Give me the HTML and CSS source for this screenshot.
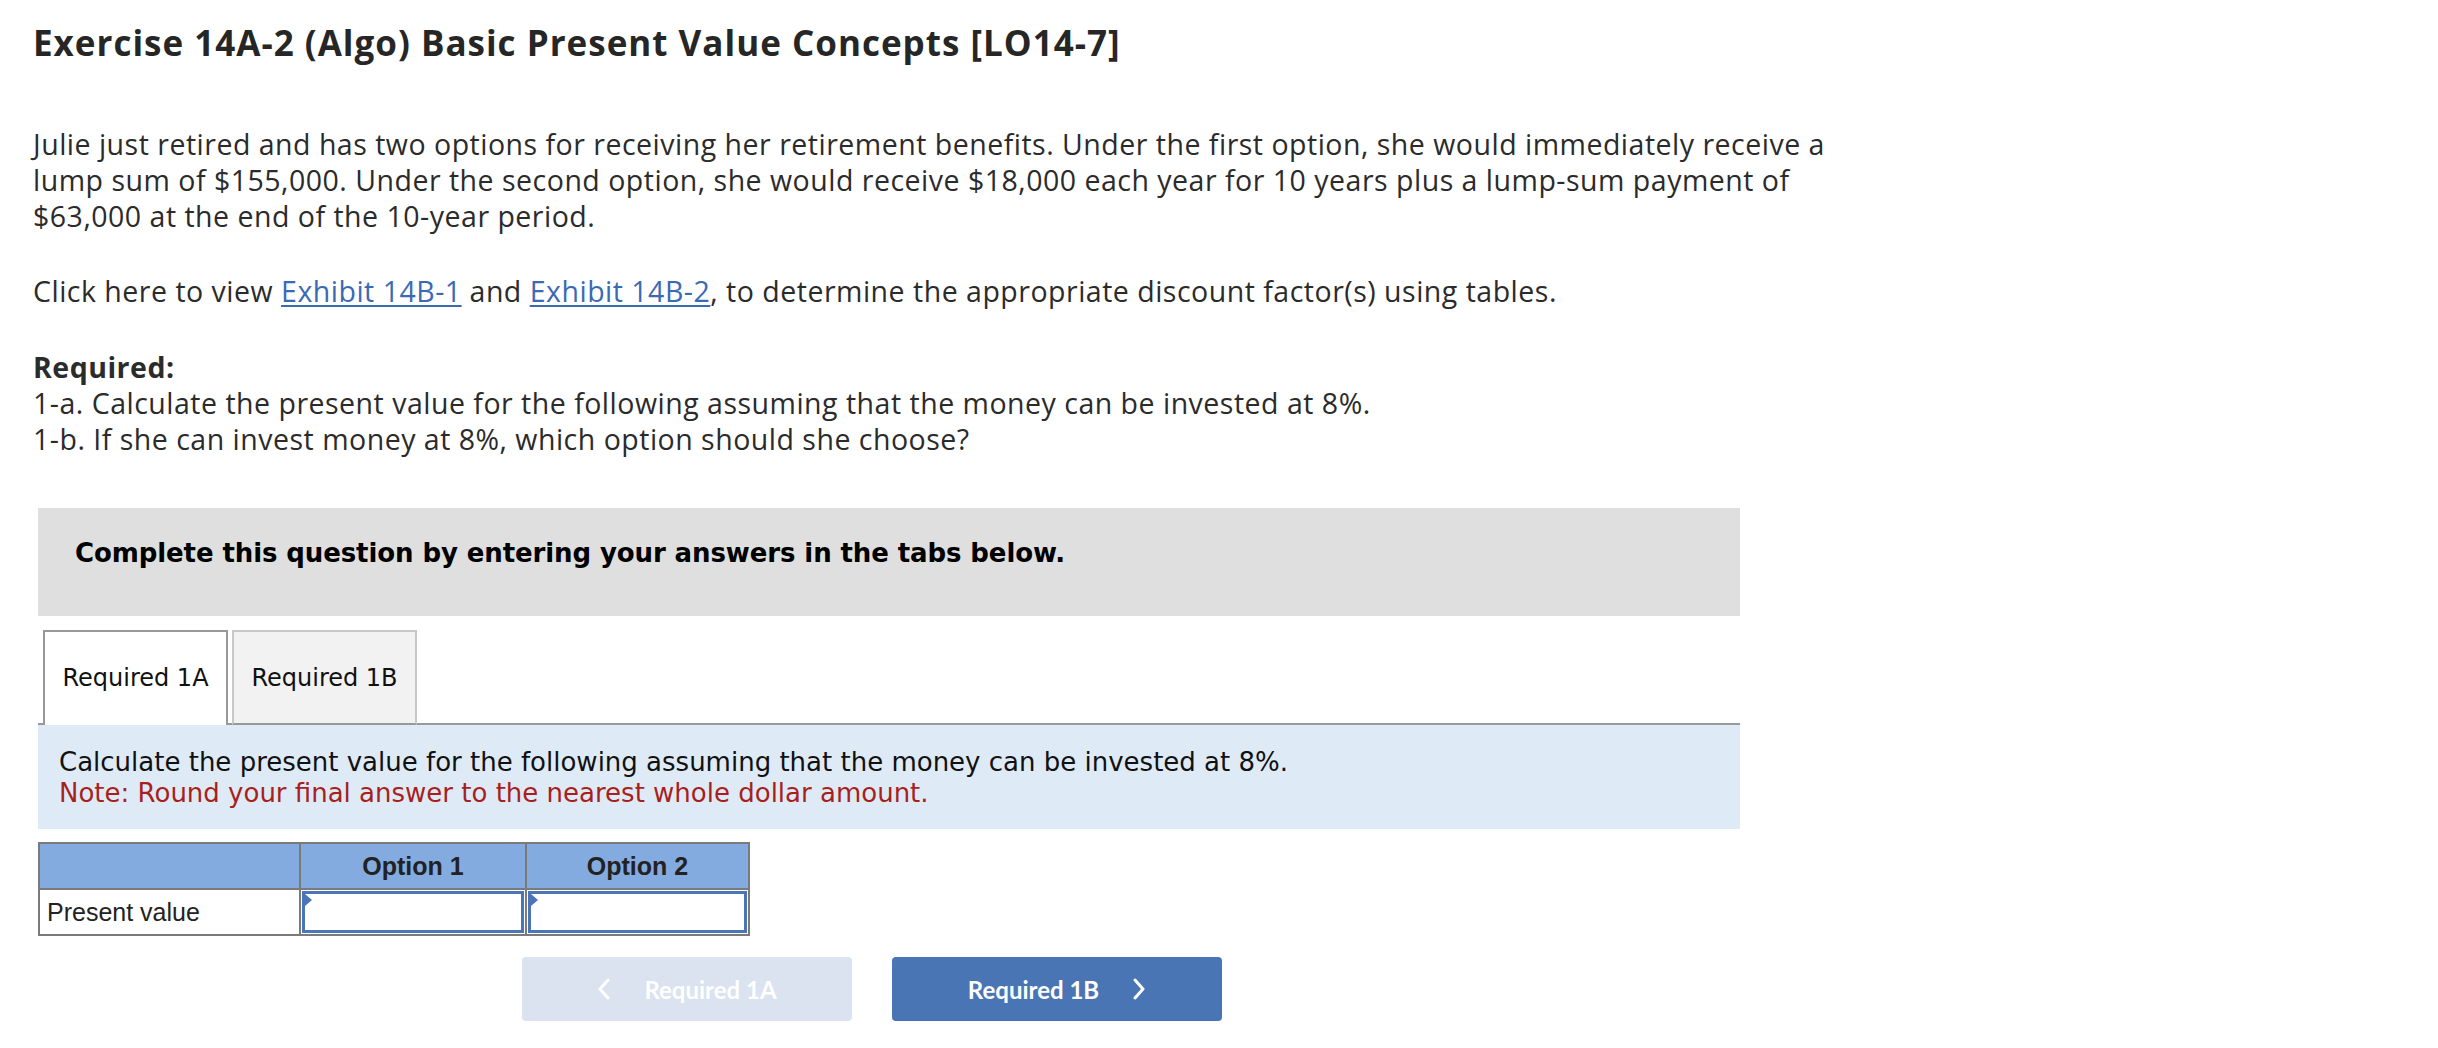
FILE: index.html
```html
<!DOCTYPE html>
<html lang="en">
<head>
<meta charset="utf-8">
<title>Exercise 14A-2 (Algo) Basic Present Value Concepts</title>
<link rel="stylesheet" href="styles.css">
</head>
<body>
<main class="page">
  <h1 class="title">Exercise 14A-2 (Algo) Basic Present Value Concepts [LO14-7]</h1>
  <p class="para intro">Julie just retired and has two options for receiving her retirement benefits. Under the first option, she would immediately receive a lump sum of $155,000. Under the second option, she would receive $18,000 each year for 10 years plus a lump-sum payment of $63,000 at the end of the 10-year period.</p>
  <p class="para click">Click here to view <a class="link" href="#">Exhibit 14B-1</a> and <a class="link" href="#">Exhibit 14B-2</a>, to determine the appropriate discount factor(s) using tables.</p>
  <div class="para required">
    <div class="req-head">Required:</div>
    <div>1-a. Calculate the present value for the following assuming that the money can be invested at 8%.</div>
    <div>1-b. If she can invest money at 8%, which option should she choose?</div>
  </div>

  <section class="widget">
    <div class="instructions">Complete this question by entering your answers in the tabs below.</div>
    <div class="tabs">
      <div class="tab active">Required 1A</div>
      <div class="tab">Required 1B</div>
    </div>
    <div class="panel">
      <div>Calculate the present value for the following assuming that the money can be invested at 8%.</div>
      <div class="note">Note: Round your final answer to the nearest whole dollar amount.</div>
    </div>
    <table class="grid">
      <thead>
        <tr><th class="c1"></th><th class="c2">Option 1</th><th class="c3">Option 2</th></tr>
      </thead>
      <tbody>
        <tr>
          <td class="label">Present value</td>
          <td class="cell"><div class="input"><span class="flag"></span></div></td>
          <td class="cell"><div class="input"><span class="flag"></span></div></td>
        </tr>
      </tbody>
    </table>
    <div class="nav">
      <button class="btn prev" type="button">
        <svg class="chev" viewBox="0 0 14 22" width="14" height="22"><path d="M11 2 L3 11 L11 20" fill="none" stroke="#fff" stroke-width="3" stroke-linecap="round" stroke-linejoin="round"/></svg>
        <span>Required 1A</span>
      </button>
      <button class="btn next" type="button">
        <span>Required 1B</span>
        <svg class="chev" viewBox="0 0 14 22" width="14" height="22"><path d="M3 2 L11 11 L3 20" fill="none" stroke="#fff" stroke-width="3" stroke-linecap="round" stroke-linejoin="round"/></svg>
      </button>
    </div>
  </section>
</main>
</body>
</html>
```

FILE: styles.css
```css
* { box-sizing: border-box; }

html, body {
  margin: 0;
  padding: 0;
  background: #fff;
}

.page {
  padding: 22px 0 0 33px;
  font-family: "Open Sans", "Lato", "Liberation Sans", sans-serif;
  color: #2b2b2b;
}

.title {
  margin: 0;
  font-size: 35px;
  line-height: 42px;
  font-weight: 700;
  letter-spacing: 1px;
  color: #262626;
}

.para {
  margin: 0;
  font-size: 28.5px;
  line-height: 36px;
  letter-spacing: 0.5px;
  width: 1830px;
}

.intro { margin-top: 62px; }
.click { margin-top: 39px; }
.required { margin-top: 40px; }

.req-head { font-weight: 700; }

.link {
  color: #3b6ab5;
  text-decoration: underline;
  text-underline-offset: 3px;
}

.widget {
  margin: 51px 0 0 5px;
  width: 1702px;
  font-family: "DejaVu Sans", Verdana, sans-serif;
  color: #000;
}

.instructions {
  height: 108px;
  background: #dfdfdf;
  padding: 30px 0 0 37px;
  font-size: 26px;
  line-height: 30px;
  font-weight: 700;
  letter-spacing: -0.1px;
}

.tabs {
  display: flex;
  gap: 4px;
  margin-top: 14px;
  padding-left: 5px;
  border-bottom: 2px solid #999;
  height: 95px;
}

.tab {
  height: 95px;
  margin-bottom: -2px;
  width: 185px;
  display: flex;
  align-items: center;
  justify-content: center;
  font-size: 24px;
  background: #f2f2f2;
  border: 2px solid #c8c8c8;
  border-bottom: 2px solid #999;
  color: #111;
}

.tab.active {
  background: #fff;
  border-color: #999;
  border-bottom: none;
  padding-bottom: 2px;
}

.panel {
  height: 104px;
  background: #deebf7;
  padding: 22px 0 0 21px;
  font-size: 26px;
  line-height: 31px;
  color: #111;
}

.note { color: #a81f1c; }

.grid {
  margin-top: 13px;
  border-collapse: collapse;
  font-family: "Liberation Sans", Arial, sans-serif;
  font-size: 25px;
}

.grid th, .grid td {
  border: 2px solid #7a7a7a;
  height: 46px;
  padding: 0;
}

.grid th {
  background: #84abdf;
  font-weight: 700;
  color: #222;
  text-align: center;
}

.c1 { width: 261px; }
.c2 { width: 226px; }
.c3 { width: 223px; }

.label {
  padding-left: 7px !important;
  color: #222;
}

.cell { position: relative; }

.input {
  position: relative;
  height: 42px;
  margin: 0 1px;
  border: 3px solid #4a76b8;
  background: #fff;
}

.flag {
  position: absolute;
  left: 0;
  top: 0;
  width: 0;
  height: 0;
  border-top: 6px solid transparent;
  border-bottom: 6px solid transparent;
  border-left: 7px solid #4a76b8;
}

.nav {
  display: flex;
  gap: 40px;
  margin-top: 21px;
  padding-left: 484px;
}

.btn {
  width: 330px;
  height: 64px;
  border: none;
  border-radius: 4px;
  display: flex;
  align-items: center;
  justify-content: center;
  gap: 33px;
  font-family: "Lato", "Liberation Sans", sans-serif;
  font-weight: 700;
  font-size: 24px;
  color: #fff;
  padding: 0;
}

.btn.prev { background: #dae3ef; }
.btn.next { background: #4a75b4; }

.chev { display: block; }
```
